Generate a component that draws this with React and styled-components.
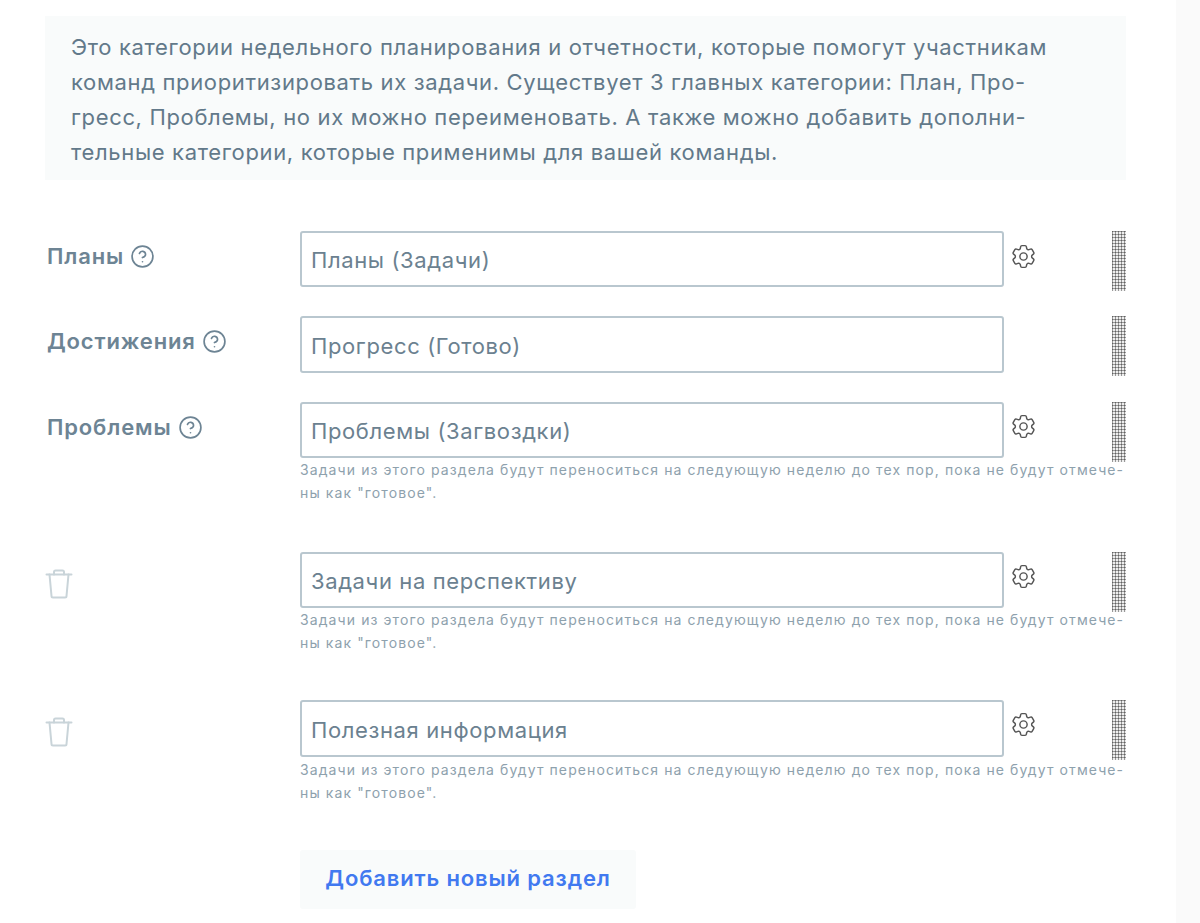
import React from 'react';
import styled, { createGlobalStyle } from 'styled-components';
import { CircleHelp } from 'lucide-react';
import { HiOutlineCog6Tooth } from 'react-icons/hi2';

const GlobalStyle = createGlobalStyle`
    html, body {
        margin: 0;
        padding: 0;
        background: #fff;
    }
`;

const Page = styled.div`
    display: grid;
    grid-template-columns: 1176px 24px;
    height: 923px;
    overflow: hidden;
    font-family: Inter, "Noto Sans", sans-serif;
`;

const Main = styled.main`
    padding: 16px 50px 0 45px;
`;

const ScrollTrack = styled.div`
    background: #fafafa;
`;

const Intro = styled.p`
    margin: 0 0 51px;
    padding: 14px 25px 10px 26px;
    background: #f9fbfb;
    color: #62798a;
    font-size: 22px;
    line-height: 35px;
    letter-spacing: 0.65px;
`;

const Row = styled.div`
    display: grid;
    grid-template-columns: 255px 704px 108px 14px;
    grid-template-rows: ${p => p.$height}px auto;
    margin-bottom: ${p => p.$gap}px;
`;

const Label = styled.div`
    display: flex;
    align-items: center;
    gap: 6px;
    height: 50px;
    padding-left: 2px;
    color: #6d8494;
    font-size: 22px;
    font-weight: 600;
    letter-spacing: 0.85px;
    svg {
        color: #6d8494;
    }
`;

const TrashSlot = styled.div`
    padding-top: 17px;
    color: #c9d4d9;
`;

const NameInput = styled.input`
    box-sizing: border-box;
    width: 100%;
    height: 100%;
    padding: 2px 9px 0;
    border: 2px solid #b9c7cf;
    border-radius: 3px;
    background: #fff;
    color: #6b8190;
    font-family: inherit;
    font-size: 22px;
    letter-spacing: 0.62px;
    outline: none;
`;

const GearSlot = styled.div`
    padding: ${p => p.$top}px 0 0 5px;
    color: #555;
`;

const Handle = styled.div`
    width: 14px;
    height: 60px;
    background-color: #eeeeee;
    background-image:
        linear-gradient(to right, rgba(0, 0, 0, 0.36) 1px, transparent 1px),
        linear-gradient(to bottom, rgba(0, 0, 0, 0.36) 1px, transparent 1px);
    background-size: 3px 3px;
`;

const Hint = styled.div`
    grid-column: 2 / 5;
    padding-top: ${p => p.$top}px;
    color: #8ea1ad;
    font-size: 14px;
    line-height: 23px;
    letter-spacing: 1.1px;
    white-space: nowrap;
`;

const Footer = styled.div`
    padding-left: 255px;
`;

const AddButton = styled.button`
    width: 336px;
    height: 59px;
    padding: 0 0 4px;
    border: none;
    border-radius: 3px;
    background: #f9fbfb;
    color: #4179f0;
    font-family: inherit;
    font-size: 22px;
    font-weight: 600;
    letter-spacing: 0.85px;
    cursor: pointer;
`;

const TrashIcon = () => (
    <svg width="28" height="30" viewBox="0 0 28 30" fill="none" stroke="currentColor" strokeWidth="2" strokeLinejoin="round" strokeLinecap="round">
        <path d="M1.5 5.5h25" />
        <path d="M9 5.5V3a1.5 1.5 0 0 1 1.5-1.5h7A1.5 1.5 0 0 1 19 3v2.500" />
        <path d="M4.500 5.500l2 21.500a1.500 1.500 0 0 0 1.500 1.500h12a1.500 1.500 0 0 0 1.500-1.500l2-21.500" />
    </svg>
);

const sections = [
    { label: 'Планы', value: 'Планы (Задачи)', height: 56, gap: 29, gear: 11 },
    { label: 'Достижения', value: 'Прогресс (Готово)', height: 57, gap: 29 },
    { label: 'Проблемы', value: 'Проблемы (Загвоздки)', height: 56, gap: 48, gear: 10, hint: 0 },
    { value: 'Задачи на перспективу', height: 56, gap: 46, gear: 10, hint: 0 },
    { value: 'Полезная информация', height: 57, gap: 46, gear: 10, hint: 1 },
];

const App = () => {
    return (
        <Page>
            <GlobalStyle />
            <Main>
                <Intro>
                    Это категории недельного планирования и отчетности, которые помогут участникам<br />
                    команд приоритизировать их задачи. Существует 3 главных категории: План, Про-<br />
                    гресс, Проблемы, но их можно переименовать. А также можно добавить дополни-<br />
                    тельные категории, которые применимы для вашей команды.
                </Intro>
                {sections.map(s => (
                    <Row key={s.value} $height={s.height} $gap={s.gap}>
                        {s.label ? (
                            <Label>
                                {s.label}
                                <CircleHelp size={25} strokeWidth={1.6} />
                            </Label>
                        ) : (
                            <TrashSlot><TrashIcon /></TrashSlot>
                        )}
                        <NameInput defaultValue={s.value} />
                        <GearSlot $top={s.gear}>{s.gear && <HiOutlineCog6Tooth size={29} strokeWidth={1.2} />}</GearSlot>
                        <Handle />
                        {s.hint !== undefined && (
                            <Hint $top={s.hint}>
                                Задачи из этого раздела будут переноситься на следующую неделю до тех пор, пока не будут отмече-<br />
                                ны как "готовое".
                            </Hint>
                        )}
                    </Row>
                ))}
                <Footer>
                    <AddButton type="button">Добавить новый раздел</AddButton>
                </Footer>
            </Main>
            <ScrollTrack />
        </Page>
    );
};

export default App;
